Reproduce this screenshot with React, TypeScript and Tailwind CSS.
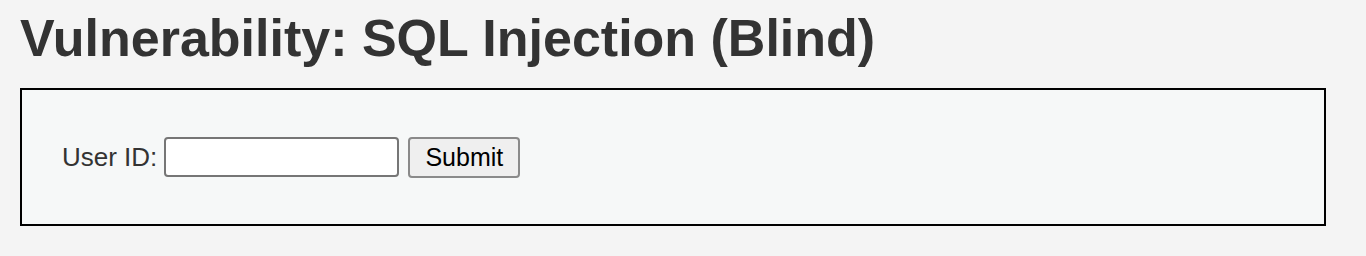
export default function App() {
  return (
    <div className="min-h-[256px] bg-[#f4f4f4] px-5 pt-[8px] font-['Liberation_Sans',Arial,sans-serif] text-[#333]">
      <h1 className="text-[52px] font-bold leading-[60px]">Vulnerability: SQL Injection (Blind)</h1>
      <div className="mt-[20px] flex h-[138px] w-[1306px] items-center border-2 border-black bg-[#f6f8f8] pl-10">
        <form className="flex items-center" onSubmit={(e) => e.preventDefault()}>
          <label className="text-[26px] leading-none text-[#333]">User ID:</label>
          <input
            type="text"
            className="ml-[7px] h-10 w-[235px] rounded-[4px] border-2 border-[#767676] bg-white"
          />
          <button
            type="submit"
            className="ml-[9px] h-[41px] w-[112px] rounded-[4px] border-2 border-[#8a8a8a] bg-[#efefef] text-[25px] leading-none text-black"
          >
            Submit
          </button>
        </form>
      </div>
    </div>
  )
}
